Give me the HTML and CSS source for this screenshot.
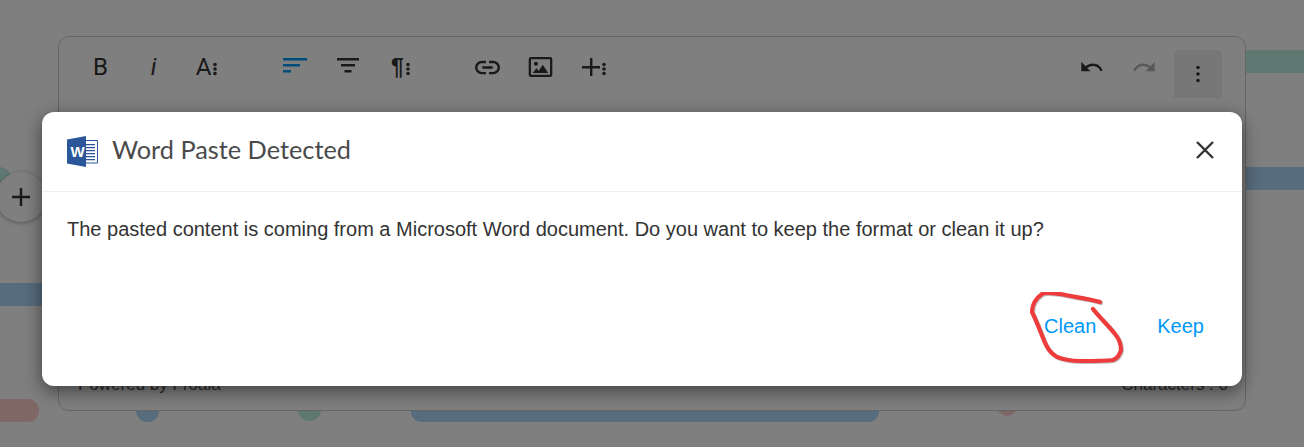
FILE: index.html
```html
<!DOCTYPE html>
<html lang="en">
<head>
<meta charset="utf-8">
<title>Word Paste Detected</title>
<link rel="stylesheet" href="styles.css">
</head>
<body>
<div class="page">
  <div class="shape bar-teal"></div>
  <div class="shape bar-blue-right"></div>
  <div class="shape bar-blue-left"></div>
  <div class="shape pill-red"></div>
  <div class="shape dot-blue"></div>
  <div class="shape dot-teal"></div>
  <div class="shape bar-blue-bottom"></div>
  <div class="shape dot-red"></div>
  <div class="shape dot-teal-left"></div>

  <div class="editor">
    <div class="toolbar">
      <div class="group">
        <div class="tool"><span class="glyph bold">B</span></div>
        <div class="tool"><span class="glyph ital">i</span></div>
        <div class="tool"><span class="glyph">A</span><svg class="more" viewBox="0 0 4 14"><circle cx="2" cy="2.500" r="1.800"/><circle cx="2" cy="7" r="1.800"/><circle cx="2" cy="11.500" r="1.800"/></svg></div>
      </div>
      <div class="group group-mid">
        <div class="tool"><svg class="icon active" viewBox="0 0 24 24"><path d="M0 3h24v2.400H0zM0 9h17v2.400H0zM0 15h8v2.400H0z"/></svg></div>
        <div class="tool"><svg class="icon" viewBox="0 0 24 24"><path d="M1 3h22v2.400H1zM5 9h14v2.400H5zM8.500 15h7v2.400h-7z"/></svg></div>
        <div class="tool"><span class="glyph para">¶</span><svg class="more" viewBox="0 0 4 14"><circle cx="2" cy="2.500" r="1.800"/><circle cx="2" cy="7" r="1.800"/><circle cx="2" cy="11.500" r="1.800"/></svg></div>
      </div>
      <div class="group">
        <div class="tool"><svg class="icon-link" viewBox="0 0 24 24"><path d="M10.500 5.500H6.500a6.500 6.500 0 0 0 0 13h4v-2.300h-4a4.200 4.200 0 0 1 0-8.400h4zM13.500 5.500v2.300h4a4.200 4.200 0 0 1 0 8.400h-4v2.300h4a6.500 6.500 0 0 0 0-13zM7 10.800h10v2.400H7z"/></svg></div>
        <div class="tool"><svg class="icon-img" viewBox="0 0 26 22"><path fill-rule="evenodd" d="M2.500 0h21A2.500 2.500 0 0 1 26 2.500v17a2.500 2.500 0 0 1-2.500 2.500h-21A2.500 2.500 0 0 1 0 19.500v-17A2.500 2.500 0 0 1 2.500 0zM2.500 2.400v17.200h21V2.400z"/><circle cx="8" cy="7.500" r="2.200"/><path d="M4.500 17.500l4-5 2.500 2.500 4.500-6.500 6 9z"/></svg></div>
        <div class="tool"><svg class="icon-plus" viewBox="0 0 18 18"><path d="M8 0h2.400v8H18v2.400h-7.600V18H8v-7.600H0V8h8z"/></svg><svg class="more" viewBox="0 0 4 14"><circle cx="2" cy="2.500" r="1.800"/><circle cx="2" cy="7" r="1.800"/><circle cx="2" cy="11.500" r="1.800"/></svg></div>
      </div>
      <div class="group group-end">
        <div class="tool"><svg class="icon-undo" viewBox="0 0 24 14"><path d="M1 1v10h10l-3.600-3.400C9.300 6.200 11.400 5.400 13.500 5.400c3.800 0 6.900 2.300 8 5.600l2.400-.8C22.500 5.800 18.400 2.800 13.500 2.800c-2.900 0-5.500 1-7.700 2.900z"/></svg></div>
        <div class="tool tool-off"><svg class="icon-undo" viewBox="0 0 24 14"><path d="M23 1v10H13l3.600-3.400C14.700 6.200 12.600 5.400 10.500 5.400c-3.800 0-6.900 2.300-8 5.600L.1 10.200C1.500 5.800 5.600 2.800 10.500 2.800c2.900 0 5.500 1 7.700 2.900z"/></svg></div>
        <div class="tool tool-on"><svg class="kebab" viewBox="0 0 4 18"><circle cx="2" cy="2.500" r="1.800"/><circle cx="2" cy="9" r="1.800"/><circle cx="2" cy="15.500" r="1.800"/></svg></div>
      </div>
    </div>
    <div class="editor-body"></div>
    <div class="editor-foot">
      <span>Powered by Froala</span>
      <span>Characters : 0</span>
    </div>
  </div>

  <div class="fab"><svg class="fab-plus" viewBox="0 0 18 18"><path d="M7.800 0h2.400v7.800H18v2.400h-7.800V18H7.800v-7.800H0V7.800h7.800z"/></svg></div>

  <div class="overlay"></div>

  <div class="modal">
    <div class="modal-head">
      <svg class="word" viewBox="0 0 31 31">
        <path class="word-page" d="M11 4.500h19.500v22.500H11z"/>
        <path class="word-lines" d="M17 8h11v1.300H17zM17 11h11v1.300H17zM17 14h11v1.300H17zM17 17h11v1.300H17zM17 20h11v1.300H17zM17 23h11v1.300H17z"/>
        <path class="word-cover" d="M0 3.500L19 0v31L0 27.500z"/>
        <text class="word-w" x="3.500" y="21">W</text>
      </svg>
      <h2 class="modal-title">Word Paste Detected</h2>
      <svg class="close" viewBox="0 0 18 18"><path d="M1 1l16 16M17 1L1 17"/></svg>
    </div>
    <p class="modal-text">The pasted content is coming from a Microsoft Word document. Do you want to keep the format or clean it up?</p>
    <div class="modal-actions">
      <span class="action">Clean</span>
      <span class="action">Keep</span>
    </div>
  </div>

  <svg class="scribble" viewBox="0 0 110 80"><path d="M70 10C60 7 45 5 30 2C22 1 15 0 12 2C6 6 2 13 2 20C6 28 9 36 13 46C17 56 20 61 27 65C35 68 42 69 50 69C62 69 75 69 83 68C88 66 90 62 91 58C91 52 90 48 85 42C78 33 70 26 63 17" /></svg>
</div>
</body>
</html>
```

FILE: styles.css
```css
* { box-sizing: border-box; }
html, body { margin: 0; height: 100%; overflow: hidden; }
body { font-family: "Liberation Sans", Arial, sans-serif; background: #fff; }

.page { position: relative; width: 1304px; height: 447px; padding: 36px 58px 0; overflow: hidden; }

.shape { position: absolute; height: 23px; }
.bar-teal { left: 1200px; top: 50px; width: 104px; background: #bff0e4; }
.bar-blue-right { left: 1200px; top: 167px; width: 104px; background: #aed8f8; }
.bar-blue-left { left: 0; top: 283px; width: 100px; background: #aed8f8; }
.pill-red { left: -20px; top: 399px; width: 59px; background: #ffcfca; border-radius: 12px; }
.dot-blue { left: 136px; top: 399px; width: 23px; background: #aed8f8; border-radius: 50%; }
.dot-teal { left: 298px; top: 398px; width: 23px; background: #bff0e4; border-radius: 50%; }
.bar-blue-bottom { left: 411px; top: 399px; width: 468px; background: #aed8f8; border-radius: 10px; }
.dot-red { left: 997px; top: 396px; width: 20px; height: 20px; background: #ffcfca; border-radius: 50%; }
.dot-teal-left { left: -12px; top: 167px; width: 23px; background: #bff0e4; border-radius: 50%; }

.editor { position: relative; width: 1188px; height: 375px; background: #fff; border: 1px solid #ccc; border-radius: 11px; display: flex; flex-direction: column; }

.toolbar { display: flex; padding: 13px 21px 0 15px; gap: 34px; height: 61px; }
.group { display: flex; }
.group-mid { margin-left: 1px; }
.group-end { margin-left: auto; }
.tool { width: 48px; height: 48px; margin: 0 2.500px; padding-bottom: 14px; display: flex; align-items: center; justify-content: center; gap: 2px; color: #333; fill: #333; }
.tool-off { opacity: .38; }
.tool-on { padding-bottom: 0; background: #efefef; border-radius: 4px 4px 0 0; }
.glyph { font-family: Roboto, sans-serif; font-size: 24px; line-height: 1; }
.ital { font-style: italic; }
.para { font-family: "Liberation Sans", sans-serif; font-weight: 700; font-size: 23px; }
.more { width: 4px; height: 14px; margin-top: 3px; }
.icon { width: 24px; height: 24px; }
.active { fill: #0098f7; }
.icon-link { width: 25px; height: 25px; }
.icon-img { width: 25px; height: 20px; }
.icon-plus { width: 18px; height: 18px; }
.icon-undo { width: 23px; height: 13px; }
.kebab { width: 4px; height: 18px; }

.editor-body { flex: 1; }
.editor-foot { display: flex; justify-content: space-between; padding: 0 17px 15px 19px; font-size: 17px; color: #555; }

.fab { position: absolute; left: -4px; top: 172px; width: 50px; height: 50px; border-radius: 50%; background: #fff; box-shadow: 0 1px 4px rgba(0,0,0,.35); display: flex; align-items: center; justify-content: center; fill: #333; }
.fab-plus { width: 18px; height: 18px; }

.overlay { position: absolute; inset: 0; background: rgba(0,0,0,.5); }

.modal { position: absolute; left: 42px; top: 112px; width: 1200px; height: 274px; background: #fff; border-radius: 12px; box-shadow: 0 5px 18px rgba(0,0,0,.5); display: flex; flex-direction: column; }
.modal-head { height: 80px; display: flex; align-items: center; padding: 0 28px 5px 25px; border-bottom: 1px solid #efefef; }
.word { width: 31px; height: 31px; margin-top: 4px; }
.word-page { fill: #fff; stroke: #2b579a; stroke-width: 1; }
.word-lines { fill: #2b579a; }
.word-cover { fill: #2b579a; }
.word-w { fill: #fff; font-family: "Liberation Sans", sans-serif; font-size: 15px; font-weight: 700; }
.modal-title { margin: 0 0 0 14px; flex: 1; font-family: Lato, sans-serif; font-weight: 400; font-size: 25.300px; color: #4a4a4a; }
.close { width: 18px; height: 18px; margin-top: 2px; fill: none; stroke: #333; stroke-width: 2.400; }
.modal-text { margin: 0; padding: 27px 25px 0; font-size: 20px; line-height: 20px; color: #333; font-family: "Liberation Sans", sans-serif; }
.modal-actions { margin-top: auto; padding: 0 38px 50px 0; display: flex; justify-content: flex-end; gap: 61px; }
.action { font-family: "Liberation Sans", sans-serif; font-size: 20px; line-height: 20px; color: #0098f7; }

.scribble { position: absolute; left: 1030px; top: 292px; width: 110px; height: 80px; fill: none; stroke: #ee3b3b; stroke-width: 4.200; stroke-linecap: round; stroke-linejoin: round; filter: drop-shadow(1px 1px 0 rgba(0,0,0,.25)); }
```
